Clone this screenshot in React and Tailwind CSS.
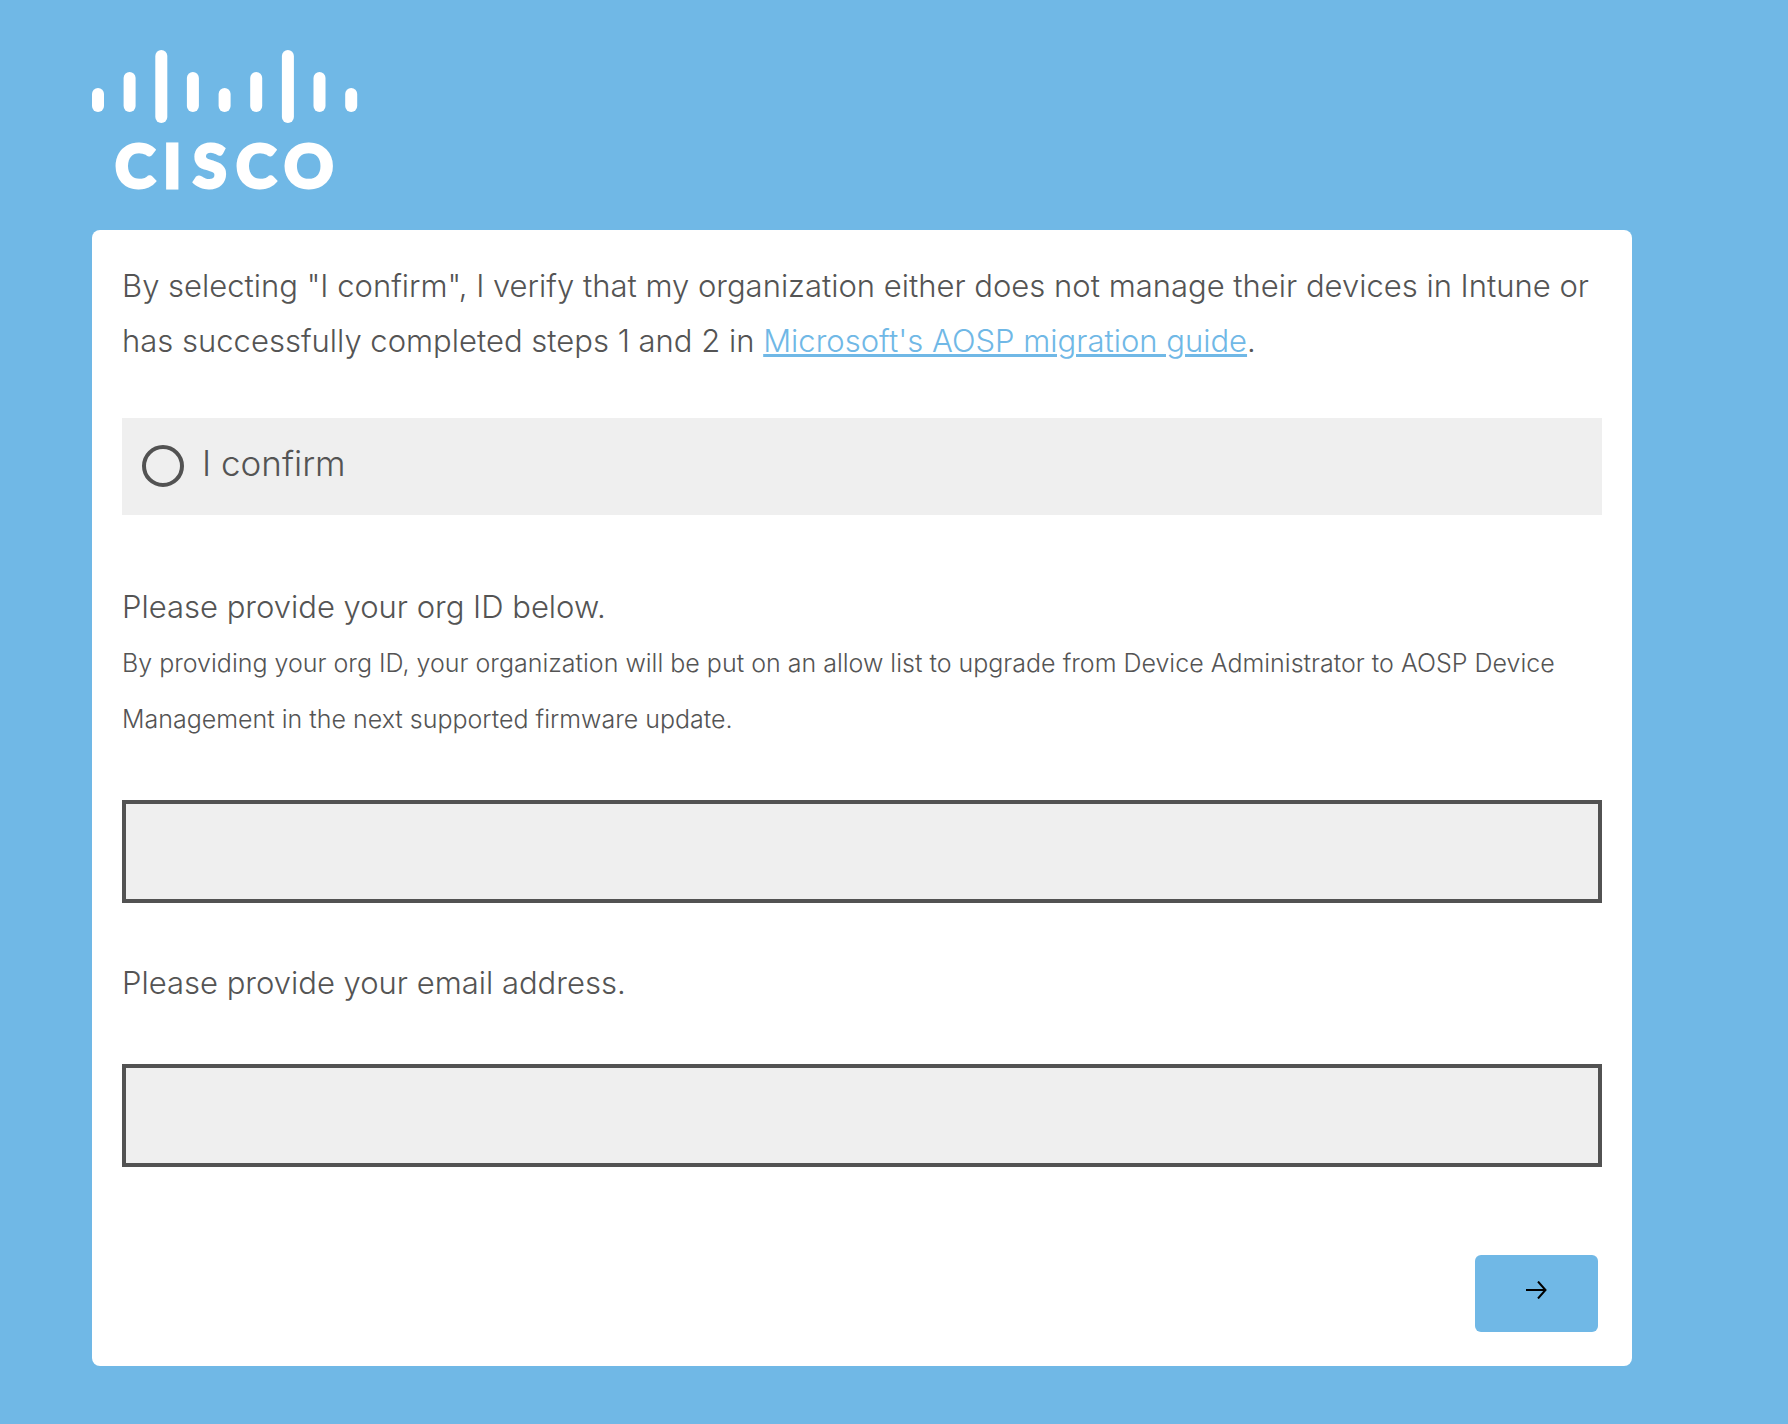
import clsx from 'clsx'

const BARS = [
  { x: 0, y: 38, h: 24 },
  { x: 31.6, y: 22, h: 40 },
  { x: 63.3, y: 0, h: 73 },
  { x: 94.9, y: 22, h: 40 },
  { x: 126.6, y: 38, h: 24 },
  { x: 158.2, y: 22, h: 40 },
  { x: 189.9, y: 0, h: 73 },
  { x: 221.5, y: 22, h: 40 },
  { x: 253.2, y: 38, h: 24 },
]

const Logo = () => (
  <svg
    className="block w-[266px] h-[160px] fill-white"
    viewBox="0 0 266 160"
    role="img"
    aria-label="Cisco"
  >
    {BARS.map(({ x, y, h }) => (
      <rect key={x} x={x} y={y} width="12" height={h} rx="6" />
    ))}
    <text
      className="font-['Lato',sans-serif] font-black text-[61px] stroke-white stroke-[3px]"
      x="23 71 101 144 192"
      y="138"
    >
      CISCO
    </text>
  </svg>
)

const TextField = ({ id, label, description, type = 'text', className }) => (
  <div className={clsx('flex flex-col', className)}>
    <label htmlFor={id} className="text-[31px] leading-[56px]">
      {label}
    </label>
    {description && (
      <p id={`${id}-description`} className="text-[25px] leading-[56px]">
        {description}
      </p>
    )}
    <input
      id={id}
      type={type}
      aria-describedby={description ? `${id}-description` : undefined}
      className="mt-[53px] h-[103px] w-full px-5 text-[31px] bg-[#efefef] border-4 border-[#525252] outline-none"
    />
  </div>
)

const App = () => (
  <div className="min-h-screen bg-[#70b8e6] pt-[50px] pb-[58px] pl-[92px] pr-[156px] font-['Inter',sans-serif] font-light text-[#545454]">
    <header>
      <Logo />
    </header>
    <main className="mt-5 rounded-lg bg-white px-[30px] pt-7 pb-[34px]">
      <form onSubmit={(e) => e.preventDefault()}>
        <fieldset>
          <legend className="text-[31px] leading-[55px]">
            By selecting "I confirm", I verify that my organization either does
            not manage their devices in Intune or has successfully completed
            steps 1 and 2 in{' '}
            <a href="#guide" className="text-[#70b8e6] underline">
              Microsoft's AOSP migration guide
            </a>
            .
          </legend>
          <label className="mt-[50px] flex h-[97px] items-center gap-[18px] bg-[#efefef] px-5 pb-0.5 text-[35px]">
            <input
              type="radio"
              name="confirm"
              className="size-[42px] appearance-none rounded-full border-4 border-[#525252] checked:bg-[#70b8e6]"
            />
            <span className="pb-1">I confirm</span>
          </label>
        </fieldset>
        <TextField
          id="org-id"
          className="mt-16"
          label="Please provide your org ID below."
          description="By providing your org ID, your organization will be put on an allow list to upgrade from Device Administrator to AOSP Device Management in the next supported firmware update."
        />
        <TextField
          id="email"
          type="email"
          className="mt-[52px]"
          label="Please provide your email address."
        />
        <div className="mt-[88px] mr-1 flex justify-end">
          <button
            type="submit"
            aria-label="Next"
            className="flex h-[77px] w-[123px] items-center justify-center rounded-md bg-[#70b8e6] pb-2"
          >
            <svg
              className="h-[18px] w-[21px] fill-none stroke-black stroke-2"
              viewBox="0 0 21 18"
            >
              <path d="M0 9h19.5M12 0.5L19.5 9L12 17.5" />
            </svg>
          </button>
        </div>
      </form>
    </main>
  </div>
)

export default App
